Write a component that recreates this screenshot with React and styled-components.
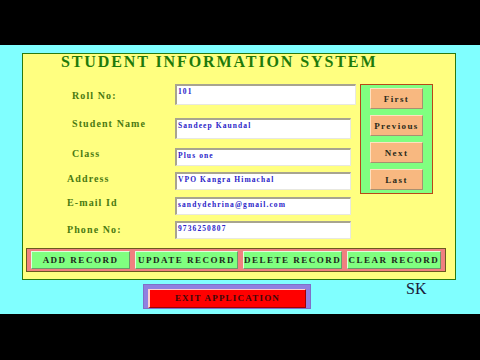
import React from 'react';
import styled, { createGlobalStyle } from 'styled-components';

const GlobalStyle = createGlobalStyle`
  html, body {
    margin: 0;
    padding: 0;
    background: #000;
  }
  * {
    box-sizing: border-box;
  }
`;

const Screen = styled.div`
  width: 480px;
  height: 360px;
  display: flex;
  flex-direction: column;
  font-family: 'Liberation Serif', 'Times New Roman', serif;
  overflow: hidden;
`;

const Letterbox = styled.div`
  height: ${(p) => p.h}px;
  background: #000;
  flex-shrink: 0;
`;

const Stage = styled.div`
  height: 269px;
  background: #80ffff;
  padding: 8px 0 0 22px;
  display: flex;
  flex-direction: column;
`;

const FormPanel = styled.div`
  width: 434px;
  background: #ffff80;
  border: 1px solid #2a7a10;
  padding-bottom: 7px;
`;

const Title = styled.h1`
  margin: 0;
  padding: 0 0 14px 38px;
  font-size: 16px;
  line-height: 16px;
  font-weight: bold;
  letter-spacing: 1.9px;
  color: #1f7a0a;
`;

const Body = styled.div`
  display: flex;
  align-items: flex-start;
`;

const Fields = styled.div`
  width: 337px;
  display: flex;
  flex-direction: column;
`;

const FieldRow = styled.div`
  display: flex;
  align-items: flex-start;
  margin-top: ${(p) => p.gap}px;
`;

const Label = styled.label`
  width: 152px;
  flex-shrink: 0;
  padding-left: ${(p) => p.indent}px;
  padding-top: ${(p) => p.drop}px;
  font-size: 10px;
  line-height: 11px;
  font-weight: bold;
  letter-spacing: 1.1px;
  color: #4a7a12;
`;

const Field = styled.div`
  width: ${(p) => p.w}px;
  height: ${(p) => p.h}px;
  background: #fff;
  border-top: 2px solid #a8a490;
  border-left: 2px solid #a8a490;
  border-right: 1px solid #e8e8e0;
  border-bottom: 1px solid #e8e8e0;
  padding: 1px 1px;
  font-size: 7.5px;
  line-height: 9px;
  font-weight: bold;
  letter-spacing: 1.1px;
  color: #2a22c8;
  white-space: nowrap;
`;

const Nav = styled.div`
  width: 73px;
  height: 110px;
  background: #80ff80;
  border: 1px solid #b84818;
  padding: 2px 9px 0;
  display: flex;
  flex-direction: column;
  gap: 6px;
`;

const NavButton = styled.button`
  width: 53px;
  height: 21px;
  padding: 0;
  background: #f8b880;
  border-top: 1px solid #ffe0c0;
  border-left: 1px solid #ffe0c0;
  border-right: 1px solid #a89070;
  border-bottom: 1px solid #a89070;
  font-family: inherit;
  font-size: 9px;
  font-weight: bold;
  letter-spacing: 1.4px;
  color: #2a2a1a;
  margin-top: ${(p) => p.shift || 0}px;
`;

const ActionBar = styled.div`
  margin: 9px 0 0 3px;
  width: 420px;
  height: 24px;
  background: #f08080;
  border: 1px solid #6a5a20;
  padding: 2px 4px 0;
  display: flex;
  gap: 5px;
`;

const ActionButton = styled.button`
  width: ${(p) => p.w}px;
  height: 18px;
  padding: 0;
  background: #80ff80;
  border-top: 1px solid #e0ffe0;
  border-left: 1px solid #e0ffe0;
  border-right: 1px solid #6a9a6a;
  border-bottom: 1px solid #6a9a6a;
  font-family: inherit;
  font-size: 9px;
  font-weight: bold;
  letter-spacing: 1.5px;
  color: #1a2a1a;
  white-space: nowrap;
`;

const Footer = styled.div`
  display: flex;
  align-items: flex-start;
  margin-top: 4px;
`;

const ExitFrame = styled.div`
  margin-left: 121px;
  width: 168px;
  height: 25px;
  background: #9080e0;
  border: 1px solid #8070c8;
  padding: 2px 4px;
`;

const ExitButton = styled.button`
  width: 158px;
  height: 19px;
  padding: 0;
  background: #ff0000;
  border-top: 1px solid #ffd0d0;
  border-left: 2px solid #ffd0d0;
  border-right: 1px solid #a00000;
  border-bottom: 1px solid #a00000;
  font-family: inherit;
  font-size: 9px;
  font-weight: bold;
  letter-spacing: 1.2px;
  color: #3a0a0a;
`;

const Signature = styled.div`
  margin-left: 95px;
  margin-top: -3px;
  font-size: 16px;
  line-height: 16px;
  color: #1a1a3a;
`;

const fields = [
  { label: 'Roll No:', value: '101', gap: 0, indent: 49, drop: 6, w: 181, h: 21 },
  { label: 'Student Name', value: 'Sandeep Kaundal', gap: 13, indent: 49, drop: 0, w: 176, h: 21 },
  { label: 'Class', value: 'Plus one', gap: 9, indent: 49, drop: 0, w: 176, h: 18 },
  { label: 'Address', value: 'VPO Kangra Himachal', gap: 6, indent: 44, drop: 1, w: 176, h: 18 },
  { label: 'E-mail Id', value: 'sandydehrina@gmail.com', gap: 7, indent: 44, drop: 0, w: 176, h: 18 },
  { label: 'Phone No:', value: '9736250807', gap: 6, indent: 44, drop: 3, w: 176, h: 18 },
];

const actions = [
  { text: 'ADD RECORD', w: 99 },
  { text: 'UPDATE RECORD', w: 103 },
  { text: 'DELETE RECORD', w: 99 },
  { text: 'CLEAR RECORD', w: 94 },
];

const App = () => {
  return (
    <Screen>
      <GlobalStyle />
      <Letterbox h={45} />
      <Stage>
        <FormPanel>
          <Title>STUDENT INFORMATION SYSTEM</Title>
          <Body>
            <Fields>
              {fields.map((f) => (
                <FieldRow key={f.label} gap={f.gap}>
                  <Label indent={f.indent} drop={f.drop}>
                    {f.label}
                  </Label>
                  <Field w={f.w} h={f.h}>
                    {f.value}
                  </Field>
                </FieldRow>
              ))}
            </Fields>
            <Nav>
              <NavButton shift={1}>First</NavButton>
              <NavButton>Previous</NavButton>
              <NavButton>Next</NavButton>
              <NavButton>Last</NavButton>
            </Nav>
          </Body>
          <ActionBar>
            {actions.map((a) => (
              <ActionButton key={a.text} w={a.w}>
                {a.text}
              </ActionButton>
            ))}
          </ActionBar>
        </FormPanel>
        <Footer>
          <ExitFrame>
            <ExitButton>EXIT APPLICATION</ExitButton>
          </ExitFrame>
          <Signature>SK</Signature>
        </Footer>
      </Stage>
      <Letterbox h={46} />
    </Screen>
  );
};

export default App;
